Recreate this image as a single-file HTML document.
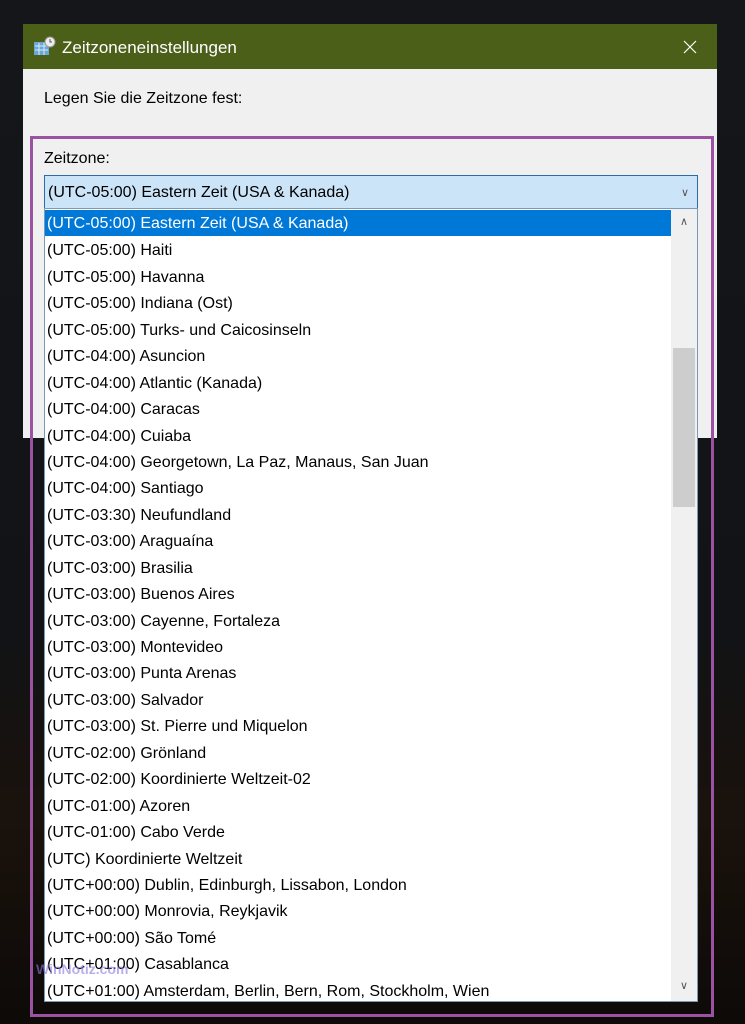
<!DOCTYPE html>
<html><head><meta charset="utf-8"><style>
*{margin:0;padding:0;box-sizing:border-box}
body{width:745px;height:1024px;overflow:hidden;background:linear-gradient(#14161a 0%,#111317 60%,#1a120c 80%,#0d0a08 100%);font-family:"Liberation Sans",sans-serif;position:relative}
.dlg{position:absolute;left:23px;top:24px;width:694px;height:414px;background:#f0f0f0}
.title{height:45px;background:#4b5f19;color:#fff;font-size:17px;line-height:47px;padding-left:39px;position:relative}
.lbl{position:absolute;font-size:16px;color:#000}
.frame{position:absolute;left:30px;top:136px;width:684px;height:881px;border:3px solid #9b52a3}
.combo{position:absolute;left:44px;top:175px;width:654px;height:34px;background:#cce4f7;border:1px solid #2b6ca8;font-size:16px;line-height:34px;padding-left:3px}
.list{position:absolute;left:44px;top:208px;width:654px;height:794px;background:#fff;border:1px solid #7a9ab8}
.row{height:26.45px;line-height:29px;font-size:16px;padding-left:2px;color:#000;white-space:nowrap}
.sel{background:#0078d7;color:#fff;width:627px;line-height:27px}
.sb{position:absolute;right:0;top:0;width:26px;height:792px;background:#f0f0f0}
.thumb{position:absolute;left:2px;top:139px;width:22px;height:159px;background:#cdcdcd}
.arr{position:absolute;left:0;width:26px;text-align:center;font-size:11px;color:#555}
</style></head><body>
<div class="dlg">
<div class="title"><svg style="position:absolute;left:11px;top:12px" width="22" height="20"><rect x="0" y="6" width="15" height="13" fill="#6aa8d8"/><path d="M1 10h13M1 14h13M5 7v12M10 7v12" stroke="#dbeaf7" stroke-width="1"/><circle cx="16" cy="6" r="5" fill="#eee" stroke="#999"/><path d="M16 3v3h2" stroke="#555" fill="none"/></svg>Zeitzoneneinstellungen<svg style="position:absolute;right:20px;top:16px" width="14" height="14"><path d="M1 1L13 13M13 1L1 13" stroke="#fff" stroke-width="1.2"/></svg></div>
<div class="lbl" style="left:21px;top:66px">Legen Sie die Zeitzone fest:</div>
</div>
<div class="frame"></div>
<div class="lbl" style="left:44px;top:150px">Zeitzone:</div>
<div class="combo">(UTC-05:00) Eastern Zeit (USA &amp; Kanada)<span style="position:absolute;right:8px;top:0;font-size:11px;color:#555">&#8744;</span></div>
<div class="list">
<div class="sb"><div class="arr" style="top:6px">&#8743;</div><div class="thumb"></div><div class="arr" style="top:770px">&#8744;</div></div>
<div style="padding-top:1px">
<div class="row sel">(UTC-05:00) Eastern Zeit (USA &amp; Kanada)</div>
<div class="row">(UTC-05:00) Haiti</div>
<div class="row">(UTC-05:00) Havanna</div>
<div class="row">(UTC-05:00) Indiana (Ost)</div>
<div class="row">(UTC-05:00) Turks- und Caicosinseln</div>
<div class="row">(UTC-04:00) Asuncion</div>
<div class="row">(UTC-04:00) Atlantic (Kanada)</div>
<div class="row">(UTC-04:00) Caracas</div>
<div class="row">(UTC-04:00) Cuiaba</div>
<div class="row">(UTC-04:00) Georgetown, La Paz, Manaus, San Juan</div>
<div class="row">(UTC-04:00) Santiago</div>
<div class="row">(UTC-03:30) Neufundland</div>
<div class="row">(UTC-03:00) Araguaína</div>
<div class="row">(UTC-03:00) Brasilia</div>
<div class="row">(UTC-03:00) Buenos Aires</div>
<div class="row">(UTC-03:00) Cayenne, Fortaleza</div>
<div class="row">(UTC-03:00) Montevideo</div>
<div class="row">(UTC-03:00) Punta Arenas</div>
<div class="row">(UTC-03:00) Salvador</div>
<div class="row">(UTC-03:00) St. Pierre und Miquelon</div>
<div class="row">(UTC-02:00) Grönland</div>
<div class="row">(UTC-02:00) Koordinierte Weltzeit-02</div>
<div class="row">(UTC-01:00) Azoren</div>
<div class="row">(UTC-01:00) Cabo Verde</div>
<div class="row">(UTC) Koordinierte Weltzeit</div>
<div class="row">(UTC+00:00) Dublin, Edinburgh, Lissabon, London</div>
<div class="row">(UTC+00:00) Monrovia, Reykjavik</div>
<div class="row">(UTC+00:00) São Tomé</div>
<div class="row">(UTC+01:00) Casablanca</div>
<div class="row">(UTC+01:00) Amsterdam, Berlin, Bern, Rom, Stockholm, Wien</div>
</div>
</div>
<div style="position:absolute;left:36px;top:961px;font-size:14px;font-weight:bold;color:rgba(140,120,220,0.6)">WinNotiz.com</div>
</body></html>
